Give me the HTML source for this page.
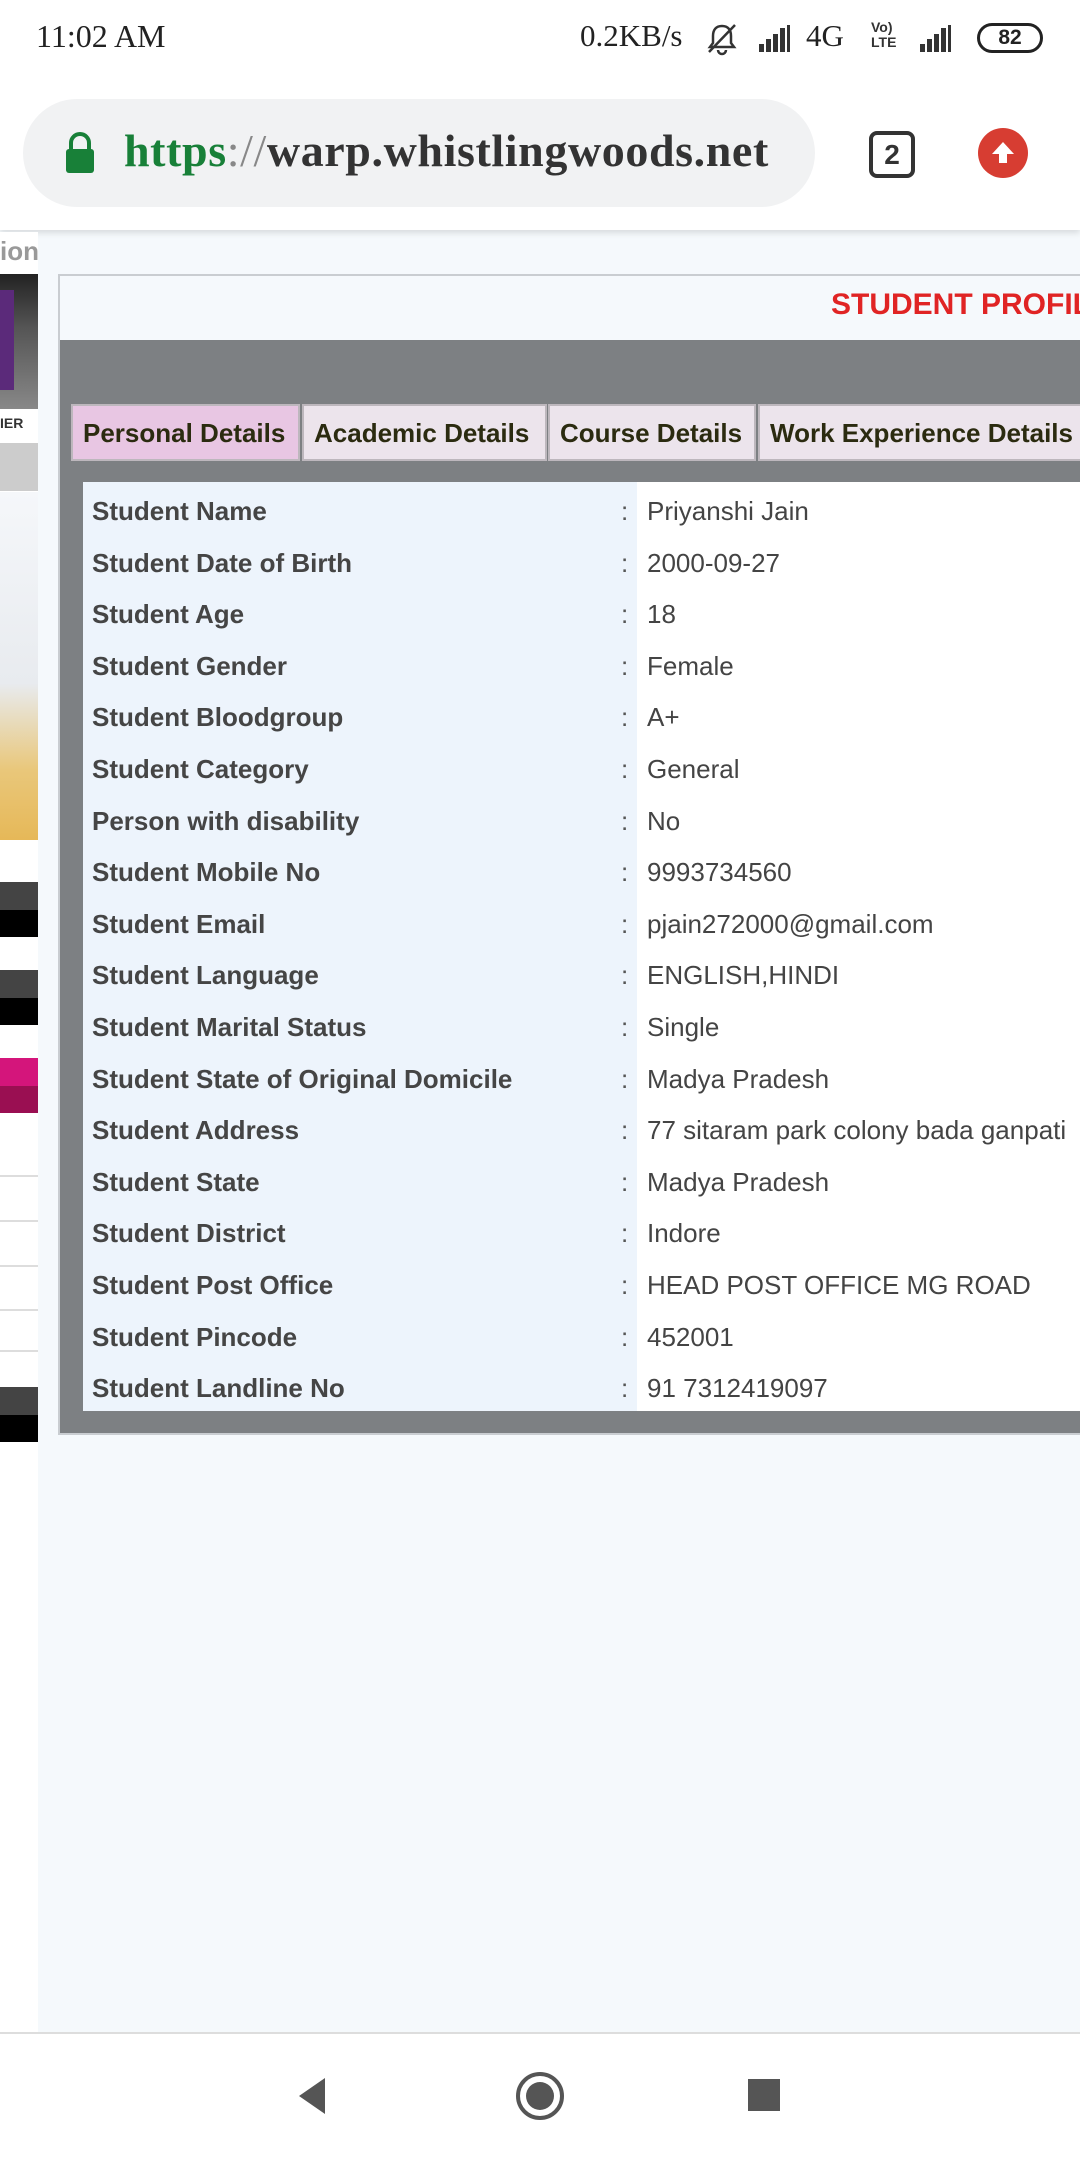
<!DOCTYPE html>
<html><head><meta charset="utf-8"><style>
*{margin:0;padding:0;box-sizing:border-box}
body{width:1080px;height:2160px;overflow:hidden;background:#f5f9fc;font-family:"Liberation Sans",sans-serif;position:relative}
.abs{position:absolute}
.status{top:0;left:0;width:1080px;height:230px;background:#fff;box-shadow:0 3px 6px rgba(0,0,0,.12)}
.row{position:absolute;left:83px;width:1000px;height:51.6px;font-size:26px;line-height:54px}
.row .l{position:absolute;left:9px;font-weight:bold;color:#454545}
.row .c{position:absolute;left:538px;color:#555}
.row .v{position:absolute;left:564px;color:#444}
.tab{position:absolute;top:404px;height:57px;background:#ece4ec;border:2px solid #bdb7bd;font-weight:bold;font-size:26px;line-height:55px;color:#2b2b10;padding-left:10px;white-space:nowrap;overflow:hidden}
</style></head><body>
<div class="abs status">
 <div class="abs" style="left:36px;top:18px;font-family:'Liberation Serif',serif;font-size:32px;color:#222">11:02 AM</div>
 <div class="abs" style="left:580px;top:18px;font-family:'Liberation Serif',serif;font-size:31px;color:#222">0.2KB/s</div>
 <svg class="abs" style="left:706px;top:22px" width="32" height="34"><path d="M16 4c-6 0-9 4-9 10v7l-3 4h24l-3-4v-7c0-6-3-10-9-10zM12 28a4 4 0 008 0" stroke="#333" stroke-width="2.5" fill="none"/><path d="M3 30L29 3" stroke="#333" stroke-width="2.5"/></svg>
 <svg class="abs" style="left:757px;top:24px" width="36" height="30"><path d="M2 28h5v-8H2zM9 28h5V15H9zM16 28h5V10h-5zM23 28h5V4h-5zM30 28h3V1h-3z" fill="#333"/></svg>
 <div class="abs" style="left:806px;top:18px;font-family:'Liberation Serif',serif;font-size:31px;color:#222">4G</div>
 <div class="abs" style="left:871px;top:20px;font-size:14px;font-weight:bold;color:#333;line-height:15px">Vo)<br>LTE</div>
 <svg class="abs" style="left:918px;top:24px" width="36" height="30"><path d="M2 28h5v-8H2zM9 28h5V15H9zM16 28h5V10h-5zM23 28h5V4h-5zM30 28h3V1h-3z" fill="#333"/></svg>
 <div class="abs" style="left:977px;top:23px;width:66px;height:30px;border:3px solid #222;border-radius:15px;font-size:21px;font-weight:bold;text-align:center;line-height:24px;color:#222">82</div>
 <div class="abs" style="left:23px;top:99px;width:792px;height:108px;background:#f1f2f3;border-radius:54px"></div>
 <svg class="abs" style="left:64px;top:131px" width="32" height="44"><path d="M7 18v-6a9 9 0 0118 0v6" stroke="#188038" stroke-width="4" fill="none"/><rect x="2" y="18" width="28" height="24" rx="3" fill="#188038"/></svg>
 <div class="abs" style="left:124px;top:124px;font-family:'Liberation Serif',serif;font-size:46px;font-weight:bold;color:#333;letter-spacing:0.6px;white-space:nowrap"><span style="color:#188038">https</span><span style="color:#888;font-weight:normal">://</span>warp.whistlingwoods.net</div>
 <div class="abs" style="left:869px;top:131px;width:46px;height:47px;border:4px solid #333;border-radius:8px;font-size:28px;font-weight:bold;text-align:center;line-height:39px;color:#333">2</div>
 <div class="abs" style="left:978px;top:128px;width:50px;height:50px;border-radius:50%;background:#d73d32"></div>
 <svg class="abs" style="left:988px;top:138px" width="30" height="30"><path d="M15 4L4 16h7v9h8v-9h7z" fill="#fff"/></svg>
</div>
<!-- left sidebar -->
<div class="abs" style="left:0;top:232px;width:38px;height:1800px;background:#fff"></div>
<div class="abs" style="left:0;top:236px;font-size:26px;font-weight:bold;color:#999">ion</div>
<div class="abs" style="left:0;top:274px;width:38px;height:135px;background:linear-gradient(#222,#555 40%,#888)"></div>
<div class="abs" style="left:0;top:290px;width:14px;height:100px;background:#5b2a7a"></div>
<div class="abs" style="left:0;top:415px;font-size:14px;font-weight:bold;color:#333">IER</div>
<div class="abs" style="left:0;top:443px;width:38px;height:48px;background:#ccc"></div>
<div class="abs" style="left:0;top:492px;width:38px;height:348px;background:linear-gradient(#f5f7fa,#e8ebef 55%,#e9c77a 80%,#e6b858)"></div>
<div class="abs" style="left:0;top:882px;width:38px;height:28px;background:#444"></div>
<div class="abs" style="left:0;top:910px;width:38px;height:27px;background:#000"></div>
<div class="abs" style="left:0;top:970px;width:38px;height:28px;background:#444"></div>
<div class="abs" style="left:0;top:998px;width:38px;height:27px;background:#000"></div>
<div class="abs" style="left:0;top:1058px;width:38px;height:28px;background:#d4157b"></div>
<div class="abs" style="left:0;top:1086px;width:38px;height:27px;background:#9a0f52"></div>
<div class="abs" style="left:0;top:1175px;width:38px;height:2px;background:#ddd"></div>
<div class="abs" style="left:0;top:1220px;width:38px;height:2px;background:#ddd"></div>
<div class="abs" style="left:0;top:1265px;width:38px;height:2px;background:#ddd"></div>
<div class="abs" style="left:0;top:1309px;width:38px;height:2px;background:#ddd"></div>
<div class="abs" style="left:0;top:1350px;width:38px;height:2px;background:#ddd"></div>
<div class="abs" style="left:0;top:1387px;width:38px;height:28px;background:#444"></div>
<div class="abs" style="left:0;top:1415px;width:38px;height:27px;background:#000"></div>
<!-- main box -->
<div class="abs" style="left:58px;top:274px;width:1030px;height:1161px;border:2px solid #c9cdd1;background:#7d8083"></div>
<div class="abs" style="left:60px;top:276px;width:1020px;height:64px;background:#f5f9fc"></div>
<div class="abs" style="left:831px;top:288px;font-size:30px;font-weight:bold;color:#e02424;white-space:nowrap">STUDENT PROFILE</div>
<div class="tab" style="left:71px;width:229px;background:#e8c6e3">Personal Details</div>
<div class="tab" style="left:302px;width:245px">Academic Details</div>
<div class="tab" style="left:548px;width:208px">Course Details</div>
<div class="tab" style="left:758px;width:340px">Work Experience Details</div>
<div class="abs" style="left:83px;top:482px;width:1000px;height:929px;background:#fff"></div>
<div class="abs" style="left:83px;top:482px;width:554px;height:929px;background:#edf4fc"></div>
<div class="row" style="top:484px"><span class="l">Student Name</span><span class="c">:</span><span class="v">Priyanshi Jain</span></div>
<div class="row" style="top:535.6px"><span class="l">Student Date of Birth</span><span class="c">:</span><span class="v">2000-09-27</span></div>
<div class="row" style="top:587.2px"><span class="l">Student Age</span><span class="c">:</span><span class="v">18</span></div>
<div class="row" style="top:638.8px"><span class="l">Student Gender</span><span class="c">:</span><span class="v">Female</span></div>
<div class="row" style="top:690.4px"><span class="l">Student Bloodgroup</span><span class="c">:</span><span class="v">A+</span></div>
<div class="row" style="top:742px"><span class="l">Student Category</span><span class="c">:</span><span class="v">General</span></div>
<div class="row" style="top:793.6px"><span class="l">Person with disability</span><span class="c">:</span><span class="v">No</span></div>
<div class="row" style="top:845.2px"><span class="l">Student Mobile No</span><span class="c">:</span><span class="v">9993734560</span></div>
<div class="row" style="top:896.8px"><span class="l">Student Email</span><span class="c">:</span><span class="v">pjain272000@gmail.com</span></div>
<div class="row" style="top:948.4px"><span class="l">Student Language</span><span class="c">:</span><span class="v">ENGLISH,HINDI</span></div>
<div class="row" style="top:1000px"><span class="l">Student Marital Status</span><span class="c">:</span><span class="v">Single</span></div>
<div class="row" style="top:1051.6px"><span class="l">Student State of Original Domicile</span><span class="c">:</span><span class="v">Madya Pradesh</span></div>
<div class="row" style="top:1103.2px"><span class="l">Student Address</span><span class="c">:</span><span class="v" style="white-space:nowrap">77 sitaram park colony bada ganpati</span></div>
<div class="row" style="top:1154.8px"><span class="l">Student State</span><span class="c">:</span><span class="v">Madya Pradesh</span></div>
<div class="row" style="top:1206.4px"><span class="l">Student District</span><span class="c">:</span><span class="v">Indore</span></div>
<div class="row" style="top:1258px"><span class="l">Student Post Office</span><span class="c">:</span><span class="v">HEAD POST OFFICE MG ROAD</span></div>
<div class="row" style="top:1309.6px"><span class="l">Student Pincode</span><span class="c">:</span><span class="v">452001</span></div>
<div class="row" style="top:1361.2px"><span class="l">Student Landline No</span><span class="c">:</span><span class="v">91 7312419097</span></div>
<!-- nav bar -->
<div class="abs" style="left:0;top:2032px;width:1080px;height:128px;background:#fff;border-top:2px solid #ddd"></div>
<svg class="abs" style="left:295px;top:2076px" width="36" height="40"><path d="M30 2L4 20l26 18z" fill="#555"/></svg>
<div class="abs" style="left:516px;top:2072px;width:48px;height:48px;border:4px solid #555;border-radius:50%"></div>
<div class="abs" style="left:526px;top:2082px;width:28px;height:28px;background:#555;border-radius:50%"></div>
<div class="abs" style="left:748px;top:2079px;width:32px;height:32px;background:#555"></div>
</body></html>
